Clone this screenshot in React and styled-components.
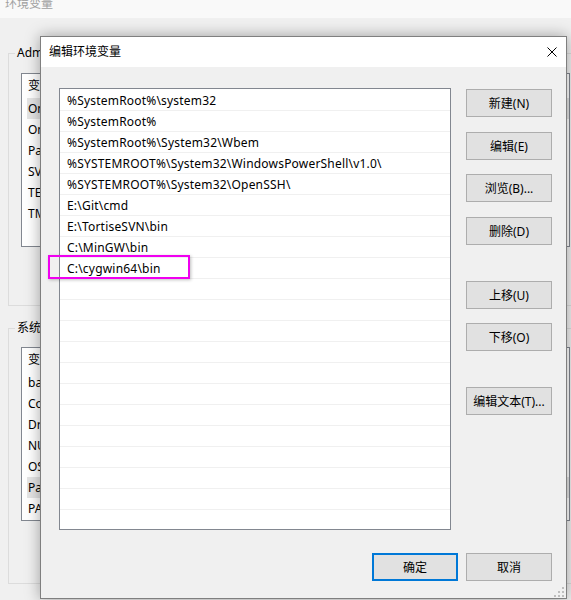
import React from 'react';
import styled, { createGlobalStyle } from 'styled-components';

const uiFont = '"Noto Sans", "Noto Sans CJK SC", sans-serif';

const GlobalStyle = createGlobalStyle`
  html, body {
    margin: 0;
    padding: 0;
  }
  body {
    font-family: ${uiFont};
    font-size: 12px;
    color: #000;
    background: #f0f0f0;
    overflow: hidden;
  }
`;

const Desktop = styled.div`
  position: relative;
  width: 571px;
  height: 600px;
  overflow: hidden;
  background: #f0f0f0;
`;

/* the parent window behind the dialog */
const BackWindow = styled.div`
  width: 640px;
`;

const BackTitle = styled.div`
  height: 18px;
  padding-left: 5px;
  background: #f9f9f9;
  color: #a0a0a0;
  overflow: hidden;
`;

const BackTitleText = styled.div`
  margin-top: -4px;
  line-height: 16px;
`;

const Group = styled.fieldset`
  margin: ${(p) => p.$top}px 0 0 8px;
  padding: 0 0 ${(p) => p.$bottom}px 12px;
  border: 1px solid #dcdcdc;
  width: 600px;
  min-width: 0;
`;

const GroupLegend = styled.legend`
  margin-left: -6px;
  padding: 0 2px;
  line-height: 16px;
  font-size: 12px;
`;

const VarList = styled.div`
  margin-top: ${(p) => p.$top}px;
  width: 549px;
  height: 174px;
  box-sizing: border-box;
  background: #fff;
  border: 1px solid #828790;
  overflow: hidden;
`;

const VarHeader = styled.div`
  height: 24px;
  line-height: 24px;
  padding-left: 6px;
`;

const VarRow = styled.div`
  height: 21px;
  line-height: 21px;
  margin-left: 5px;
  padding-left: 1px;
  background: ${(p) => (p.$selected ? '#e5e5e5' : 'transparent')};
  white-space: nowrap;
`;

/* the edit dialog */
const Dialog = styled.div`
  position: absolute;
  left: 40px;
  top: 36px;
  width: 527px;
  height: 563px;
  box-sizing: border-box;
  border: 1px solid #7f7f7f;
  background: #f0f0f0;
  box-shadow: 0 0 14px rgba(0, 0, 0, 0.35);
  display: flex;
  flex-direction: column;
`;

const TitleBar = styled.div`
  height: 30px;
  flex-shrink: 0;
  background: #fff;
  display: flex;
  align-items: center;
  justify-content: space-between;
  padding: 0 9px 0 8px;
`;

const TitleText = styled.div`
  font-size: 12px;
  line-height: 16px;
`;

const DialogBody = styled.div`
  flex: 1;
  padding: 21px 14px 17px 18px;
  display: flex;
  flex-direction: column;
`;

const MainRow = styled.div`
  display: flex;
  gap: 15px;
`;

const PathList = styled.div`
  width: 392px;
  height: 442px;
  box-sizing: border-box;
  padding-top: 1px;
  background: #fff;
  border: 1px solid #828790;
  overflow: hidden;
`;

const PathRow = styled.div`
  height: 20px;
  line-height: 21px;
  padding-left: 7px;
  border-bottom: 1px solid #f0f0f0;
  letter-spacing: 0.2px;
  white-space: nowrap;
`;

const ButtonColumn = styled.div`
  width: 86px;
  padding-top: 1px;
  display: flex;
  flex-direction: column;
`;

const Button = styled.button`
  width: 86px;
  height: 28px;
  margin-top: ${(p) => p.$gap || 0}px;
  padding: 0;
  box-sizing: border-box;
  border: ${(p) => (p.$primary ? '2px solid #0078d7' : '1px solid #adadad')};
  background: #e1e1e1;
  color: #000;
  font-family: ${uiFont};
  font-size: 12px;
  white-space: nowrap;
`;

const Footer = styled.div`
  margin-top: 23px;
  display: flex;
  justify-content: flex-end;
  gap: 8px;
`;

const Marker = styled.div`
  position: absolute;
  left: 7px;
  top: 218px;
  width: 142px;
  height: 24px;
  box-sizing: border-box;
  border: 2px solid #f000f0;
  box-shadow: 1px 1px 3px rgba(0, 0, 0, 0.25);
`;

const Grip = styled.svg`
  position: absolute;
  right: 2px;
  bottom: 1px;
`;

const CloseIcon = () => (
  <svg width="10" height="10" viewBox="0 0 10 10">
    <path d="M0.5 0.5 L9.5 9.5 M9.5 0.5 L0.5 9.5" stroke="#000" strokeWidth="1" />
  </svg>
);

const userVars = ['OneDrive', 'OneDriveConsumer', 'Path', 'SVN_HOME', 'TEMP', 'TMP'];
const systemVars = ['bak', 'ComSpec', 'DriverData', 'NUMBER_OF_PROCESSORS', 'OS', 'Path', 'PATHEXT'];

const paths = [
  '%SystemRoot%\\system32',
  '%SystemRoot%',
  '%SystemRoot%\\System32\\Wbem',
  '%SYSTEMROOT%\\System32\\WindowsPowerShell\\v1.0\\',
  '%SYSTEMROOT%\\System32\\OpenSSH\\',
  'E:\\Git\\cmd',
  'E:\\TortiseSVN\\bin',
  'C:\\MinGW\\bin',
  'C:\\cygwin64\\bin',
];

const sideButtons = [
  { label: '新建(N)', gap: 0 },
  { label: '编辑(E)', gap: 15 },
  { label: '浏览(B)...', gap: 14 },
  { label: '删除(D)', gap: 15 },
  { label: '上移(U)', gap: 36 },
  { label: '下移(O)', gap: 14 },
  { label: '编辑文本(T)...', gap: 36 },
];

const rows = Array.from({ length: 20 }, (_, i) => paths[i] || '');

const App = () => {
  return (
    <Desktop>
      <GlobalStyle />
      <BackWindow>
        <BackTitle>
          <BackTitleText>环境变量</BackTitleText>
        </BackTitle>
        <Group $top={27} $bottom={58}>
          <GroupLegend>Administrator 的用户变量(U)</GroupLegend>
          <VarList $top={12}>
            <VarHeader>变量</VarHeader>
            {userVars.map((name, i) => (
              <VarRow key={name} $selected={i === 0}>{name}</VarRow>
            ))}
          </VarList>
        </Group>
        <Group $top={14} $bottom={62}>
          <GroupLegend>系统变量(S)</GroupLegend>
          <VarList $top={11}>
            <VarHeader>变量</VarHeader>
            {systemVars.map((name) => (
              <VarRow key={name} $selected={name === 'Path'}>{name}</VarRow>
            ))}
          </VarList>
        </Group>
      </BackWindow>

      <Dialog>
        <TitleBar>
          <TitleText>编辑环境变量</TitleText>
          <CloseIcon />
        </TitleBar>
        <DialogBody>
          <MainRow>
            <PathList>
              {rows.map((p, i) => (
                <PathRow key={i}>{p}</PathRow>
              ))}
            </PathList>
            <ButtonColumn>
              {sideButtons.map((b) => (
                <Button key={b.label} $gap={b.gap}>{b.label}</Button>
              ))}
            </ButtonColumn>
          </MainRow>
          <Footer>
            <Button $primary>确定</Button>
            <Button>取消</Button>
          </Footer>
        </DialogBody>
        <Marker />
        <Grip width="10" height="10" viewBox="0 0 10 10">
          <rect x="8" y="0" width="2" height="2" fill="#bdbdbd" />
          <rect x="4" y="4" width="2" height="2" fill="#bdbdbd" />
          <rect x="8" y="4" width="2" height="2" fill="#bdbdbd" />
          <rect x="0" y="8" width="2" height="2" fill="#bdbdbd" />
          <rect x="4" y="8" width="2" height="2" fill="#bdbdbd" />
          <rect x="8" y="8" width="2" height="2" fill="#bdbdbd" />
        </Grip>
      </Dialog>
    </Desktop>
  );
};

export default App;
